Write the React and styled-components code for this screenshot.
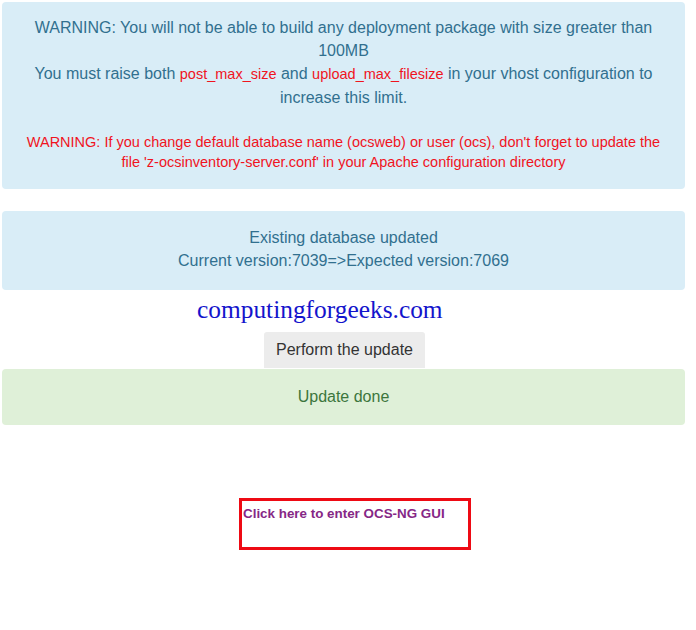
import React from "react"
import styled, { createGlobalStyle } from "styled-components"

const GlobalStyle = createGlobalStyle`
    body {
        margin: 0;
        background: #ffffff;
        font-family: "Liberation Sans", Arial, sans-serif;
    }
`

const Page = styled.div`
    display: flex;
    flex-direction: column;
    width: 683px;
    padding: 2px 0 0 2px;
`

const Alert = styled.div`
    background: ${props => props.bg};
    color: ${props => props.color};
    border-radius: 4px;
    text-align: center;
    font-size: 16px;
    line-height: 23px;
    padding: ${props => props.pad};
`

const Danger = styled.span`
    color: #f0141e;
    font-size: 14.5px;
`

const Note = styled.div`
    color: #f0141e;
    font-size: 14.5px;
    line-height: 20px;
    margin-top: 23px;
`

const Gap = styled.div`
    height: ${props => props.h}px;
`

const Watermark = styled.div`
    height: 42px;
    line-height: 38px;
    padding-left: 195px;
    font-family: "Liberation Serif", "Times New Roman", serif;
    font-size: 25.4px;
    color: #1414cc;
`

const ButtonRow = styled.div`
    display: flex;
    justify-content: center;
    padding-left: 2px;
`

const Button = styled.button`
    background: #ececec;
    color: #333333;
    border: none;
    border-radius: 3px 3px 0 0;
    font-family: "Liberation Sans", Arial, sans-serif;
    font-size: 16px;
    line-height: 22px;
    padding: 7px 12px;
    white-space: nowrap;
`

const LinkRow = styled.div`
    display: flex;
    padding-left: 237px;
`

const LinkBox = styled.div`
    width: 225px;
    height: 43px;
    border: 3px solid #ee0a14;
    padding: 3px 0 0 1px;
    box-sizing: content-box;
`

const Link = styled.a`
    color: #862786;
    font-weight: bold;
    font-size: 13.4px;
    line-height: 20px;
    text-decoration: none;
`

const App = () => {
    return (
        <Page>
            <GlobalStyle />
            <Alert bg="#d9edf7" color="#31708f" pad="14px 15px 17px">
                WARNING: You will not be able to build any deployment package with size greater than 100MB
                <br />
                You must raise both <Danger>post_max_size</Danger> and <Danger>upload_max_filesize</Danger> in your vhost configuration to increase this limit.
                <Note>
                    WARNING: If you change default database name (ocsweb) or user (ocs), don't forget to update the file 'z-ocsinventory-server.conf' in your Apache configuration directory
                </Note>
            </Alert>
            <Gap h={22} />
            <Alert bg="#d9edf7" color="#31708f" pad="15px 15px 18px">
                Existing database updated
                <br />
                Current version:7039=&gt;Expected version:7069
            </Alert>
            <Watermark>computingforgeeks.com</Watermark>
            <ButtonRow>
                <Button>Perform the update</Button>
            </ButtonRow>
            <Gap h={1} />
            <Alert bg="#dff0d8" color="#3c763d" pad="16px 15px 17px">
                Update done
            </Alert>
            <Gap h={73} />
            <LinkRow>
                <LinkBox>
                    <Link href="#">Click here to enter OCS-NG GUI</Link>
                </LinkBox>
            </LinkRow>
        </Page>
    )
}

export default App
